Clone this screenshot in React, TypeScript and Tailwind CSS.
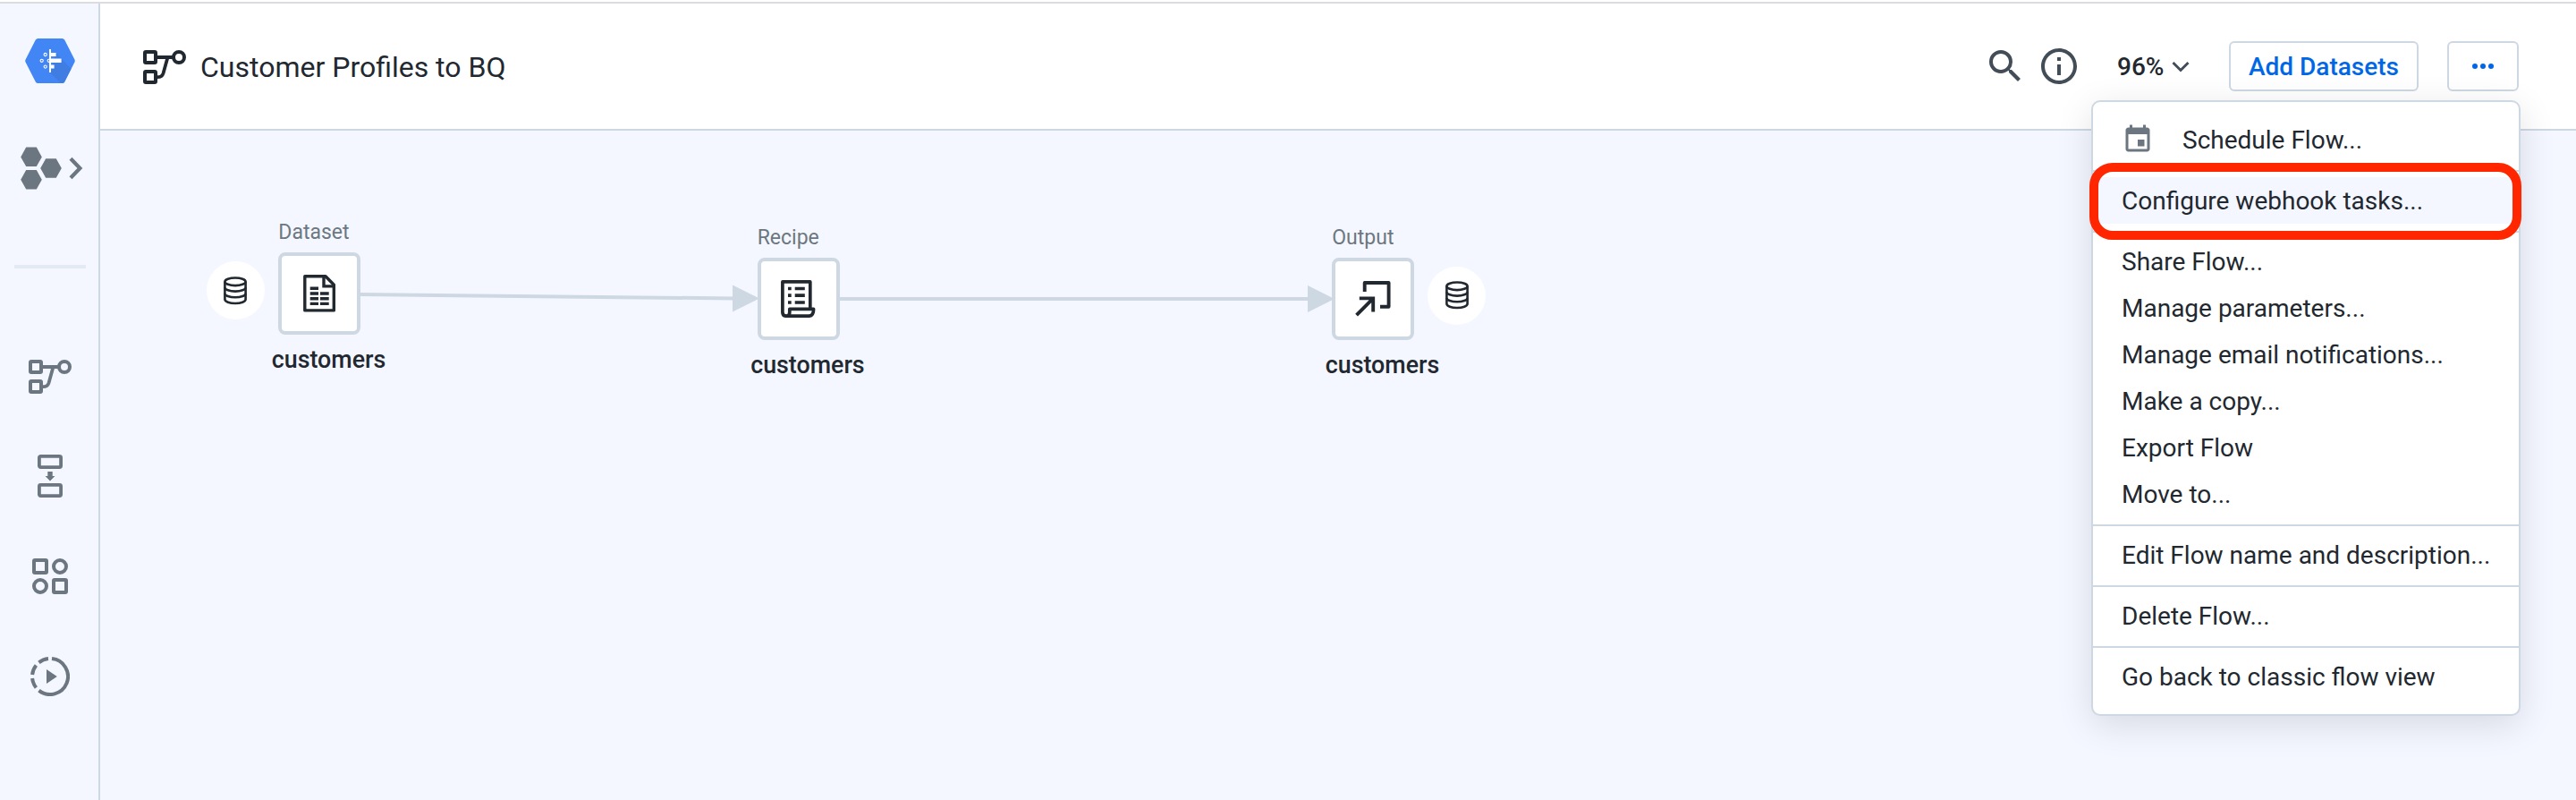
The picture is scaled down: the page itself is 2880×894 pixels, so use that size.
import type { ReactNode } from 'react'

type IconProps = { className?: string }

const FlowIcon = ({ className }: IconProps) => (
  <svg width="48" height="38" viewBox="0 0 48 38" fill="none" stroke="currentColor" strokeWidth="4" className={className}>
    <rect x="2" y="2" width="12" height="12" rx="1" />
    <rect x="2" y="24" width="12" height="12" rx="1" />
    <circle cx="40" cy="8" r="6" />
    <path d="M16 8H33M27.5 8L22.5 26Q21.2 30.2 16 30.2" strokeWidth="3.8" />
  </svg>
)

const JobsIcon = () => (
  <svg width="28" height="48" viewBox="0 0 28 48" fill="none" stroke="currentColor" strokeWidth="3.8">
    <rect x="1.9" y="1.9" width="24.2" height="12.2" rx="1.5" />
    <rect x="1.9" y="33.9" width="24.2" height="12.2" rx="1.5" />
    <path d="M11.3 19H16.7V24H19.4L14 29.4L8.6 24H11.3Z" fill="currentColor" stroke="none" />
  </svg>
)

const LibraryIcon = () => (
  <svg width="40" height="40" viewBox="0 0 40 40" fill="none" stroke="currentColor" strokeWidth="4">
    <rect x="2" y="2" width="14" height="14" rx="1" />
    <circle cx="31" cy="9" r="7" />
    <circle cx="9" cy="31" r="7" />
    <rect x="24" y="24" width="14" height="14" rx="1" />
  </svg>
)

const RunIcon = () => (
  <svg width="44" height="44" viewBox="0 0 44 44" fill="none" stroke="currentColor" strokeWidth="4">
    <path d="M24 2.1A20 20 0 1 1 9.5 37.6" />
    <path d="M20 2.1A20 20 0 0 0 9.5 6.4" />
    <path d="M6.4 9.5A20 20 0 0 0 2.1 20" />
    <path d="M2.1 24A20 20 0 0 0 6.4 34.5" />
    <path d="M18 14L29.8 22L18 30Z" fill="currentColor" stroke="none" />
  </svg>
)

const Logo = () => (
  <svg width="56" height="50" viewBox="0 0 56 50">
    <path d="M14.5 0H41.5Q43.3 0 44.2 1.6L55.4 23.5Q56.2 25 55.4 26.5L44.2 48.4Q43.3 50 41.5 50H14.5Q12.7 50 11.8 48.4L.6 26.5Q-.2 25 .6 23.5L11.8 1.6Q12.7 0 14.5 0Z" fill="#4285f4" />
    <path d="M34.6 16L40.6 22.6L51.5 34L44.2 48.4Q43.3 50 41.5 50H40L28 38Z" fill="#3f7de3" />
    <path d="M27 12H29V38H27ZM29 16H34.6V20H29ZM29 22.6H40.6V27H29ZM29 29.6H32.6V33.6H29Z" fill="#fff" />
    <g fill="none" stroke="#fff" strokeWidth="1.1">
      <circle cx="22.7" cy="18" r="1.6" />
      <circle cx="18.7" cy="24.8" r="1.6" />
      <circle cx="26.7" cy="24.8" r="1.6" />
      <circle cx="22.7" cy="31.6" r="1.6" />
    </g>
  </svg>
)

const SwitcherIcon = () => (
  <svg width="70" height="48" viewBox="0 0 70 48" fill="#6c7680">
    <path d="M6.2 .6H17.8L23.8 11.4L17.8 22.1H6.2L.2 11.4Z" />
    <path d="M28.2 13.2H39.8L45.8 24L39.8 34.8H28.2L22.2 24Z" />
    <path d="M6.2 26H17.8L23.8 36.7L17.8 47.4H6.2L.2 36.7Z" />
    <path d="M56 13.2L66.4 24L56 34.8" fill="none" stroke="#6c7680" strokeWidth="4.2" />
  </svg>
)

const SearchIcon = () => (
  <svg width="48" height="48" viewBox="0 0 24 24" fill="currentColor">
    <path d="M15.5 14h-.79l-.28-.27A6.471 6.471 0 0 0 16 9.5 6.5 6.5 0 1 0 9.5 16c1.61 0 3.09-.59 4.23-1.57l.27.28v.79l5 4.99L20.49 19l-4.99-5zm-6 0C7.01 14 5 11.99 5 9.5S7.01 5 9.5 5 14 7.01 14 9.5 11.99 14 9.5 14z" />
  </svg>
)

const InfoIcon = () => (
  <svg width="48" height="48" viewBox="0 0 24 24" fill="currentColor">
    <path d="M11 7h2v2h-2zm0 4h2v6h-2zm1-9C6.48 2 2 6.48 2 12s4.48 10 10 10 10-4.48 10-10S17.52 2 12 2zm0 18c-4.41 0-8-3.59-8-8s3.59-8 8-8 8 3.59 8 8-3.59 8-8 8z" />
  </svg>
)

const CalendarIcon = () => (
  <svg width="36" height="36" viewBox="0 0 24 24" fill="#6c7680">
    <path d="M17 12h-5v5h5v-5zM16 1v2H8V1H6v2H5c-1.11 0-1.99.9-1.99 2L3 19c0 1.1.89 2 2 2h14c1.1 0 2-.9 2-2V5c0-1.1-.9-2-2-2h-1V1h-2zm3 18H5V8h14v11z" />
  </svg>
)

const DatasetIcon = () => (
  <svg width="36" height="42" viewBox="0 0 36 42" fill="none" stroke="#22282f" strokeWidth="3.4">
    <path d="M1.8 1.8H25L34.3 11.2V39.9H1.8Z" strokeLinejoin="round" />
    <path d="M23 1.8V12.9H34.3" />
    <path d="M7.7 15.3H17M7.7 21H17M7.7 26.7H17M7.7 32.4H17M19 21H28.7M19 26.7H28.7M19 32.4H28.7" />
  </svg>
)

const RecipeIcon = () => (
  <svg width="39" height="42" viewBox="0 0 39 42" fill="none" stroke="#22282f" strokeWidth="3.7">
    <path d="M32.8 32V1.9H1.9V36Q1.9 40.2 6.2 40.2H31Q36.6 40.2 36.6 32.4H9.8V36Q9.8 40.2 6.2 40.2" strokeLinejoin="round" />
    <path d="M8 9.5H11.7M8 17.2H11.7M8 25H11.7M15.7 9.5H26.8M15.7 17.2H26.8M15.7 25H26.8" />
  </svg>
)

const OutputIcon = () => (
  <svg width="40" height="40" viewBox="0 0 40 40" fill="none" stroke="#22282f" strokeWidth="3.9">
    <path d="M10.7 12V2H37.6V28.8H28" strokeLinejoin="round" />
    <path d="M4.8 19.4H20.2V34.4M1.6 38.2L20 19.6" />
  </svg>
)

const DatabaseIcon = () => (
  <svg width="26" height="32" viewBox="0 0 26 32" fill="none" stroke="#22282f" strokeWidth="2.6">
    <ellipse cx="13" cy="5.8" rx="11.6" ry="4.3" />
    <path d="M1.4 5.8V25.6C1.4 28 6.6 30 13 30S24.6 28 24.6 25.6V5.8" />
    <path d="M1.4 12.2C1.4 14.6 6.6 16.6 13 16.6S24.6 14.6 24.6 12.2M1.4 18.9C1.4 21.3 6.6 23.3 13 23.3S24.6 21.3 24.6 18.9" />
  </svg>
)

type NodeProps = { kind: string; name: string; icon: ReactNode; className: string }

function FlowNode({ kind, name, icon, className }: NodeProps) {
  return (
    <div className={`absolute flex flex-col ${className}`}>
      <span className="h-9 text-[23px] leading-7 text-[#6c7780]">{kind}</span>
      <div className="flex size-[92px] items-center justify-center rounded-lg border-4 border-[#ced8e2] bg-white">
        {icon}
      </div>
      <span className="-ml-[7.5px] mt-3 text-[26.8px] font-medium leading-8">{name}</span>
    </div>
  )
}

const DatabaseBadge = ({ className }: { className: string }) => (
  <div className={`absolute flex size-[65px] items-center justify-center rounded-full bg-white ${className}`}>
    <DatabaseIcon />
  </div>
)

const MENU_SECTIONS = [
  ['Configure webhook tasks...'],
  [
    'Share Flow...',
    'Manage parameters...',
    'Manage email notifications...',
    'Make a copy...',
    'Export Flow',
    'Move to...',
  ],
  ['Edit Flow name and description...'],
  ['Delete Flow...'],
  ['Go back to classic flow view'],
]

function FlowMenu() {
  return (
    <div className="absolute left-[2338px] top-[112px] z-10 w-[480px] rounded-[10px] border-2 border-[#ced8e2] bg-white pb-2 pt-4 text-[28px] shadow-[0_10px_40px_rgba(0,0,0,0.12)]">
      <div className="mb-2 flex h-[52px] items-center pl-8">
        <CalendarIcon />
        <span className="ml-8 pt-0.5">Schedule Flow...</span>
      </div>
      {MENU_SECTIONS.map((items, i) => (
        <div key={i} className="mb-2 border-t-2 border-[#ced8e2] pt-1.5">
          {items.map((item) => (
            <div
              key={item}
              className={`flex h-[52px] items-center whitespace-nowrap pl-8 pt-0.5 ${i === 0 ? 'bg-[#f4f7ff]' : ''}`}
            >
              {item}
            </div>
          ))}
        </div>
      ))}
      {/* Highlight around the webhook entry */}
      <div className="absolute -left-1 top-[68px] h-[86px] w-[483px] rounded-[26px] border-10 border-[#ff2600]" />
    </div>
  )
}

export default function App() {
  return (
    <div className="relative flex h-[894px] w-[2880px] flex-col overflow-hidden bg-white pt-0.5 font-[Roboto,sans-serif] text-[#22282f]">
      <div className="h-0.5 shrink-0 bg-[#dadce0]" />
      <div className="flex flex-1">
        <nav className="flex w-28 shrink-0 flex-col items-center border-r-2 border-[#ced8e2] bg-[#f4f7ff] pl-0.5 pt-[39px] text-[#6c7680]">
          <Logo />
          <div className="ml-1 mt-[71px]">
            <SwitcherIcon />
          </div>
          <div className="mt-[84px] h-1 w-20 bg-[#e3eaf3]" />
          <div className="mt-[102px] flex flex-col items-center">
            <FlowIcon />
            <div className="mt-[68px]"><JobsIcon /></div>
            <div className="mt-[68px]"><LibraryIcon /></div>
            <div className="mt-[70px]"><RunIcon /></div>
          </div>
        </nav>

        <div className="flex flex-1 flex-col">
          <header className="flex h-[142px] shrink-0 items-center border-b-2 border-[#ced8e2] pl-12 pr-16">
            <FlowIcon className="mt-0.5" />
            <h1 className="ml-4 pt-0.5 text-[32px]">Customer Profiles to BQ</h1>
            <div className="ml-auto flex items-center text-[#434d57]">
              <SearchIcon />
              <div className="ml-3"><InfoIcon /></div>
              <div className="ml-[41px] flex w-[125px] items-center pt-0.5 text-[28px] font-medium text-[#22282f]">
                96%
                <svg width="20" height="14" viewBox="0 0 20 14" fill="none" stroke="#434d57" strokeWidth="3" className="ml-[9px]">
                  <path d="M1.5 2L10 10.5L18.5 2" />
                </svg>
              </div>
              <button className="h-14 w-[212px] rounded-md border-2 border-[#ced8e2] bg-white pt-0.5 text-[28px] font-medium text-[#0067e6]">
                Add Datasets
              </button>
              <button className="ml-8 flex h-14 w-20 items-center justify-center gap-[3px] rounded-md border-2 border-[#ced8e2] bg-white">
                <i className="size-1.5 rounded-full bg-[#0067e6]" />
                <i className="size-1.5 rounded-full bg-[#0067e6]" />
                <i className="size-1.5 rounded-full bg-[#0067e6]" />
              </button>
            </div>
          </header>

          {/* Flow canvas */}
          <main className="relative flex-1 bg-[#f4f7ff]">
            <svg width="1500" height="300" className="absolute left-0 top-0" fill="#ced8e2" stroke="#ced8e2">
              <path d="M290 183L710 187.5M826 188H1352" strokeWidth="4" />
              <path d="M707 172.5V202.5L737 187.5ZM1350 173V203L1380 188Z" stroke="none" />
            </svg>
            <DatabaseBadge className="left-[118.5px] top-[146px]" />
            <FlowNode kind="Dataset" name="customers" icon={<DatasetIcon />} className="left-[199.3px] top-[100.3px]" />
            <FlowNode kind="Recipe" name="customers" icon={<RecipeIcon />} className="left-[734.7px] top-[106px]" />
            <FlowNode kind="Output" name="customers" icon={<OutputIcon />} className="left-[1377.3px] top-[106px]" />
            <DatabaseBadge className="left-[1484px] top-[151.5px]" />
          </main>
        </div>
      </div>
      <FlowMenu />
    </div>
  )
}
